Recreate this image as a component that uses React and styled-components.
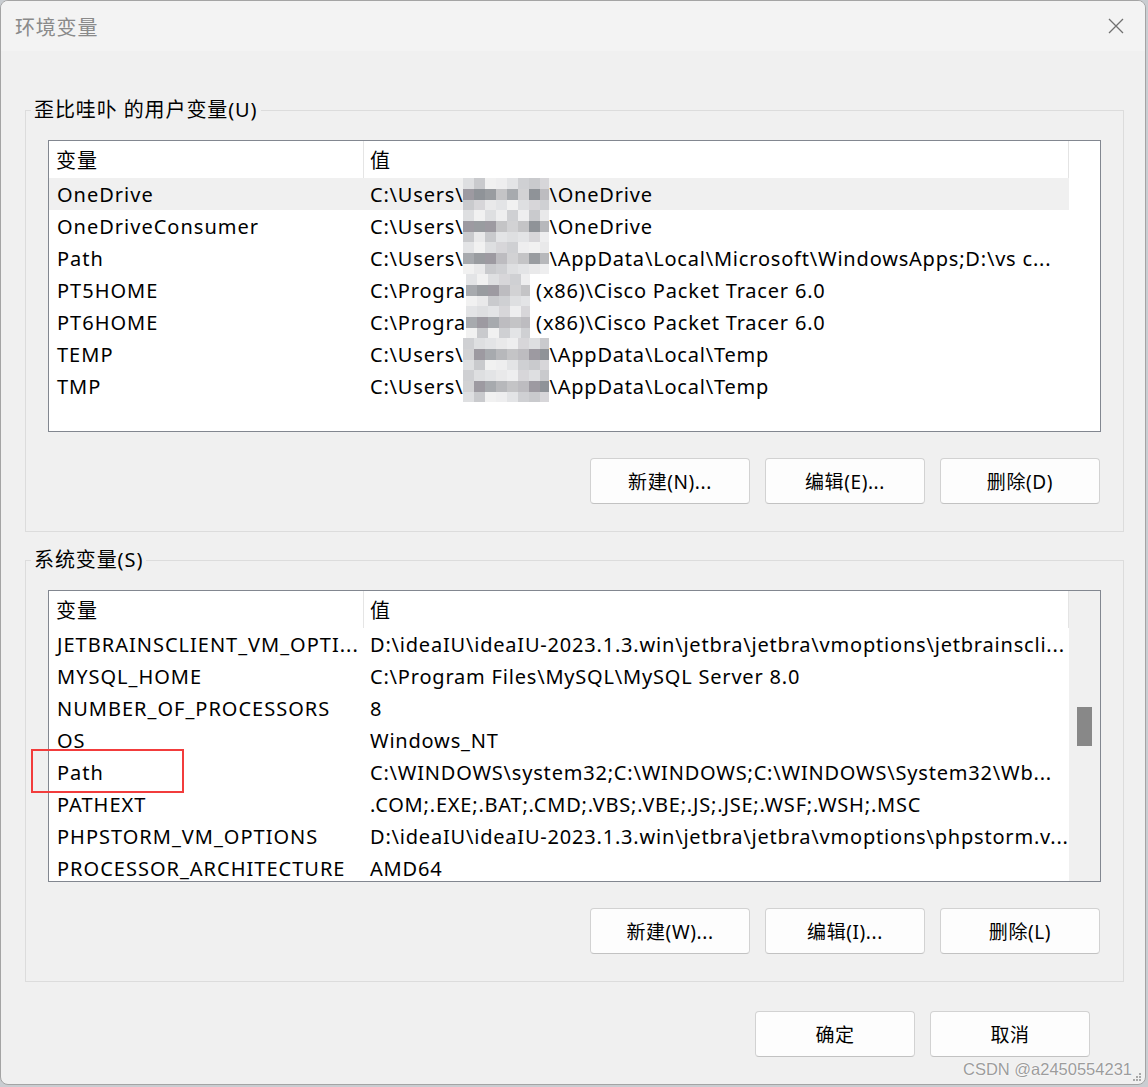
import React from 'react';
import styled, { createGlobalStyle } from 'styled-components';

const GlobalStyle = createGlobalStyle`
  html, body {
    margin: 0;
    padding: 0;
  }
  body {
    background: #c9cdd1;
    font-family: "Noto Sans", "Noto Sans CJK SC", sans-serif;
  }
`;

const Window = styled.div`
  position: relative;
  width: 1146px;
  height: 1085px;
  box-sizing: border-box;
  border: 1px solid #a4a4a4;
  border-radius: 8px;
  background: #f0f0f0;
  overflow: hidden;
  display: flex;
  flex-direction: column;
`;

const TitleBar = styled.div`
  height: 50px;
  flex-shrink: 0;
  background: #f3f3f3;
  display: flex;
  align-items: center;
  justify-content: space-between;
  padding: 0 20px 0 14px;
`;

const Title = styled.span`
  color: #8a8a8a;
  font-size: 20px;
  letter-spacing: 0.8px;
`;

const CloseBtn = styled.div`
  width: 18px;
  height: 18px;
  display: flex;
  align-items: center;
  justify-content: center;
`;

const Content = styled.div`
  flex: 1;
  display: flex;
  flex-direction: column;
  padding: 47px 21px 0 24px;
`;

const Group = styled.fieldset`
  margin: 0;
  min-width: 0;
  border: 1px solid #dcdcdc;
  padding: 18px 22px 27px 22px;

  & + & {
    margin-top: 16px;
  }
`;

const Legend = styled.legend`
  font-size: 20px;
  line-height: 24px;
  letter-spacing: 0.9px;
  padding: 0 3px;
  margin-left: -17px;
  color: #000;
`;

const ListWrap = styled.div`
  position: relative;
`;

const List = styled.div`
  height: 292px;
  box-sizing: border-box;
  border: 1px solid #828790;
  background: #fff;
  display: flex;
  overflow: hidden;
`;

const ListMain = styled.div`
  flex: 1;
  min-width: 0;
  display: flex;
  flex-direction: column;
`;

const Gutter = styled.div`
  width: 31px;
  flex-shrink: 0;
  background: ${p => (p.$track ? '#f0f0f0' : '#fff')};
`;

const Thumb = styled.div`
  margin: 116px 0 0 8px;
  width: 15px;
  height: 39px;
  background: #888;
`;

const HeaderRow = styled.div`
  display: grid;
  grid-template-columns: 315px 1fr;
  height: 37px;
  flex-shrink: 0;
  border-right: 1px solid #e4e4e4;
`;

const HeaderCell = styled.div`
  display: flex;
  align-items: center;
  padding-left: ${p => (p.$first ? '7px' : '6px')};
  border-right: ${p => (p.$first ? '1px solid #e5e5e5' : 'none')};
  font-size: 20px;
  letter-spacing: 1px;
  color: #000;
`;

const Row = styled.div`
  display: grid;
  grid-template-columns: 315px 1fr;
  height: 32px;
  flex-shrink: 0;
  background: ${p => (p.$selected ? '#f0f0f0' : 'transparent')};
`;

const Cell = styled.div`
  display: flex;
  align-items: center;
  height: 32px;
  overflow: hidden;
  white-space: pre;
  padding-left: ${p => (p.$first ? '8px' : '6px')};
  font-size: 20px;
  letter-spacing: ${p => (p.$first ? '1px' : '0.8px')};
  color: #000;
`;

const MosaicBox = styled.span`
  display: inline-grid;
  grid-auto-rows: 11px;
  height: 32px;
  overflow: hidden;
  flex-shrink: 0;
`;

const Block = styled.span`
  display: block;
`;

const RedMark = styled.div`
  position: absolute;
  left: -17px;
  top: 159px;
  width: 153px;
  height: 44px;
  box-sizing: border-box;
  border: 2px solid #f23c3c;
  pointer-events: none;
`;

const ButtonRow = styled.div`
  display: flex;
  justify-content: flex-end;
  gap: 15px;
  margin-top: 26px;
  padding-right: ${p => p.$pad || '1px'};
`;

const Button = styled.button`
  width: 160px;
  height: 46px;
  box-sizing: border-box;
  border: 1px solid #d2d2d2;
  border-bottom-color: #c2c2c2;
  border-radius: 4px;
  background: #fdfdfd;
  font-family: inherit;
  font-size: 19px;
  letter-spacing: 0.6px;
  color: #000;
  padding: 0;
`;

const Footer = styled(ButtonRow)`
  margin-top: 29px;
`;

const Watermark = styled.div`
  position: absolute;
  right: 13px;
  bottom: 5px;
  font-family: "Liberation Sans", Arial, sans-serif;
  font-size: 16.5px;
  color: #9c9c9c;
  text-shadow: 0 0 1px #fff, 0 0 2px #fff;
`;

const Grip = styled.svg`
  position: absolute;
  right: 3px;
  bottom: 2px;
`;

const DARK = ['#a7aaae', '#8f9398', '#c4c4c6', '#9d9aa1', '#b7b8bb', '#d2d2d4', '#999ca0', '#bdbcc0'];
const LIGHT = ['#dedfe1', '#e9e9ea', '#cfd0d3', '#f1f1f1', '#d7d6d9', '#e3e4e6', '#c9cacd', '#eeeeef'];

const Mosaic = ({ width, seed }) => {
  const cols = Math.ceil(width / 11);
  const cells = [];
  for (let r = 0; r < 3; r++) {
    for (let c = 0; c < cols; c++) {
      const pal = r === 1 ? DARK : LIGHT;
      const idx = (c * 5 + r * 3 + seed * 7 + ((c * c + seed) % 3)) % pal.length;
      cells.push(<Block key={`${r}-${c}`} style={{ background: pal[idx] }} />);
    }
  }
  return (
    <MosaicBox style={{ width, gridTemplateColumns: `repeat(${cols}, 11px)` }}>
      {cells}
    </MosaicBox>
  );
};

const userVars = [
  { name: 'OneDrive', value: ['C:\\Users\\', { m: 86 }, '\\OneDrive'], selected: true },
  { name: 'OneDriveConsumer', value: ['C:\\Users\\', { m: 86 }, '\\OneDrive'] },
  { name: 'Path', value: ['C:\\Users\\', { m: 86 }, '\\AppData\\Local\\Microsoft\\WindowsApps;D:\\vs c...'] },
  { name: 'PT5HOME', value: ['C:\\Progra', { m: 64 }, ' (x86)\\Cisco Packet Tracer 6.0'] },
  { name: 'PT6HOME', value: ['C:\\Progra', { m: 64 }, ' (x86)\\Cisco Packet Tracer 6.0'] },
  { name: 'TEMP', value: ['C:\\Users\\', { m: 86 }, '\\AppData\\Local\\Temp'] },
  { name: 'TMP', value: ['C:\\Users\\', { m: 86 }, '\\AppData\\Local\\Temp'] },
];

const systemVars = [
  { name: 'JETBRAINSCLIENT_VM_OPTI...', value: ['D:\\ideaIU\\ideaIU-2023.1.3.win\\jetbra\\jetbra\\vmoptions\\jetbrainscli...'] },
  { name: 'MYSQL_HOME', value: ['C:\\Program Files\\MySQL\\MySQL Server 8.0'] },
  { name: 'NUMBER_OF_PROCESSORS', value: ['8'] },
  { name: 'OS', value: ['Windows_NT'] },
  { name: 'Path', value: ['C:\\WINDOWS\\system32;C:\\WINDOWS;C:\\WINDOWS\\System32\\Wb...'] },
  { name: 'PATHEXT', value: ['.COM;.EXE;.BAT;.CMD;.VBS;.VBE;.JS;.JSE;.WSF;.WSH;.MSC'] },
  { name: 'PHPSTORM_VM_OPTIONS', value: ['D:\\ideaIU\\ideaIU-2023.1.3.win\\jetbra\\jetbra\\vmoptions\\phpstorm.v...'] },
  { name: 'PROCESSOR_ARCHITECTURE', value: ['AMD64'] },
];

const VarList = ({ rows, scroll }) => (
  <List>
    <ListMain>
      <HeaderRow>
        <HeaderCell $first>变量</HeaderCell>
        <HeaderCell>值</HeaderCell>
      </HeaderRow>
      {rows.map((row, i) => (
        <Row key={row.name + i} $selected={row.selected}>
          <Cell $first>{row.name}</Cell>
          <Cell>
            {row.value.map((part, j) =>
              typeof part === 'string'
                ? <span key={j}>{part}</span>
                : <Mosaic key={j} width={part.m} seed={i + j} />
            )}
          </Cell>
        </Row>
      ))}
    </ListMain>
    <Gutter $track={scroll}>{scroll && <Thumb />}</Gutter>
  </List>
);

const App = () => {
  return (
    <>
      <GlobalStyle />
      <Window>
        <TitleBar>
          <Title>环境变量</Title>
          <CloseBtn>
            <svg width="16" height="16" viewBox="0 0 16 16">
              <path d="M1 1 L15 15 M15 1 L1 15" stroke="#707070" strokeWidth="1.3" fill="none" />
            </svg>
          </CloseBtn>
        </TitleBar>

        <Content>
          <Group>
            <Legend>歪比哇卟 的用户变量(U)</Legend>
            <ListWrap>
              <VarList rows={userVars} />
            </ListWrap>
            <ButtonRow>
              <Button>新建(N)...</Button>
              <Button>编辑(E)...</Button>
              <Button>删除(D)</Button>
            </ButtonRow>
          </Group>

          <Group>
            <Legend>系统变量(S)</Legend>
            <ListWrap>
              <VarList rows={systemVars} scroll />
              <RedMark />
            </ListWrap>
            <ButtonRow>
              <Button>新建(W)...</Button>
              <Button>编辑(I)...</Button>
              <Button>删除(L)</Button>
            </ButtonRow>
          </Group>

          <Footer $pad="34px">
            <Button>确定</Button>
            <Button>取消</Button>
          </Footer>
        </Content>

        <Watermark>CSDN @a2450554231</Watermark>
        <Grip width="12" height="12" viewBox="0 0 12 12">
          {[[9, 3], [6, 6], [9, 6], [3, 9], [6, 9], [9, 9]].map(([x, y]) => (
            <rect key={`${x}-${y}`} x={x} y={y} width="2" height="2" fill="#a8a8a8" />
          ))}
        </Grip>
      </Window>
    </>
  );
};

export default App;
